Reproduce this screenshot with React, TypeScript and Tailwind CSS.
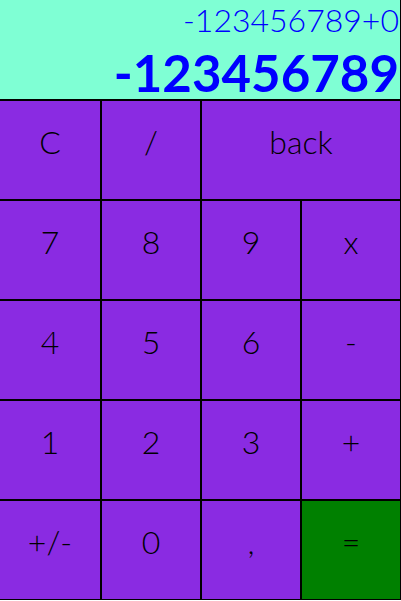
import React from "react";

const font = { fontFamily: "Lato, 'Noto Sans', sans-serif" };

function Btn({ label, className = "" }: { label: string; className?: string }) {
  return (
    <div
      className={
        "flex h-[100px] items-center justify-center border border-black pb-4 text-[32px] font-light text-black " +
        className
      }
    >
      {label}
    </div>
  );
}

export default function App() {
  return (
    <div className="h-[601px] w-[401px] overflow-hidden bg-white" style={font}>
      <div className="flex h-[100px] w-[401px] flex-col items-end border-r border-b border-black bg-[#7fffd4] pr-px text-[#0000ff]">
        <div className="text-[32px] font-light leading-[40px]">-123456789+0</div>
        <div className="mt-2 text-[51px] font-bold leading-[50px]">-123456789</div>
      </div>
      <div className="-ml-px grid w-[402px] grid-cols-[102px_100px_100px_100px] bg-[#8a2be2]">
        <Btn label="C" />
        <Btn label="/" />
        <Btn label="back" className="col-span-2" />
        <Btn label="7" />
        <Btn label="8" />
        <Btn label="9" />
        <Btn label="x" />
        <Btn label="4" />
        <Btn label="5" />
        <Btn label="6" />
        <Btn label="-" />
        <Btn label="1" />
        <Btn label="2" />
        <Btn label="3" />
        <Btn label="+" />
        <Btn label="+/-" />
        <Btn label="0" />
        <Btn label="," />
        <Btn label="=" className="bg-[#008000]" />
      </div>
    </div>
  );
}
